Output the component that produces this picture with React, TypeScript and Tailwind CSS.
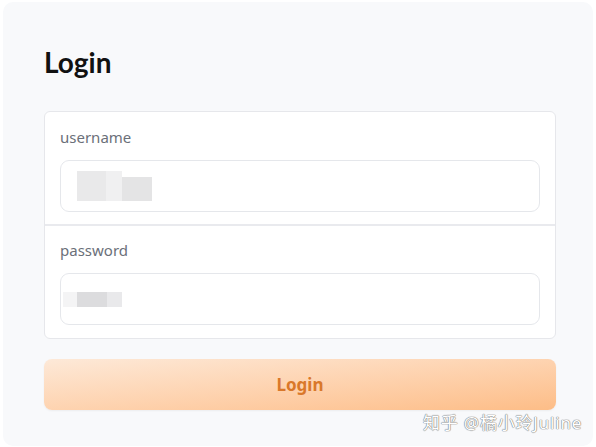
import React from "react";

export default function App() {
  return (
    <div
      className="w-[596px] h-[447px] bg-white pt-[2px] pl-[3px] pr-[3px] pb-[1px]"
      style={{ fontFamily: '"Noto Sans", "Open Sans", "Noto Sans CJK SC", sans-serif' }}
    >
      <div className="relative w-[590px] h-[444px] rounded-[10px] bg-[#f8f9fb] pl-[41px] pr-[37px] pt-[41px]">
        <h1
          className="text-[28px] leading-[38px] font-bold text-[#111111]"
          style={{ fontFamily: 'Lato, "Noto Sans", sans-serif' }}
        >
          Login
        </h1>
        <div className="mt-[30px] w-[512px] rounded-[6px] border border-[#e6e7eb] bg-white overflow-hidden">
          <div className="px-[15px] pt-[14px] pb-[12px]">
            <div className="text-[15px] leading-[22px] text-[#6b7079]">username</div>
            <div className="mt-[12px] h-[52px] rounded-[9px] border border-[#e5e7eb] bg-white flex items-center pl-[16px]">
              <div className="flex items-end h-[30px]">
                <div className="w-[29px] h-[30px] bg-[#e9e9ea]" />
                <div className="w-[16px] h-[30px] bg-[#f0f0f1]" />
                <div className="w-[30px] h-[24px] bg-[#e4e4e5]" />
              </div>
            </div>
          </div>
          <div className="h-[2px] bg-[#e9eaee]" />
          <div className="px-[15px] pt-[13px] pb-[13px]">
            <div className="text-[15px] leading-[22px] text-[#6b7079]">password</div>
            <div className="mt-[12px] h-[52px] rounded-[9px] border border-[#e5e7eb] bg-white flex items-center pl-[2px]">
              <div className="flex items-center h-[15px]">
                <div className="w-[14px] h-[15px] bg-[#f4f4f5]" />
                <div className="w-[30px] h-[15px] bg-[#dcdcde]" />
                <div className="w-[15px] h-[15px] bg-[#e9e9eb]" />
              </div>
            </div>
          </div>
        </div>
        <button className="mt-[20px] w-[512px] h-[51px] rounded-[8px] bg-gradient-to-br from-[#fde9d8] to-[#fdbd87] text-[17px] font-bold text-[#d9782a] shadow-[0_1px_2px_rgba(0,0,0,0.05)]">
          Login
        </button>
        <div
          className="absolute left-[420px] top-[410px] text-[17px] leading-[22px] text-white tracking-[0.8px]"
          style={{ textShadow: "0 0 1px #808080, 0 0 1px #808080, 0 0 1px #808080" }}
        >
          知乎 @橘小玲Juline
        </div>
      </div>
    </div>
  );
}
